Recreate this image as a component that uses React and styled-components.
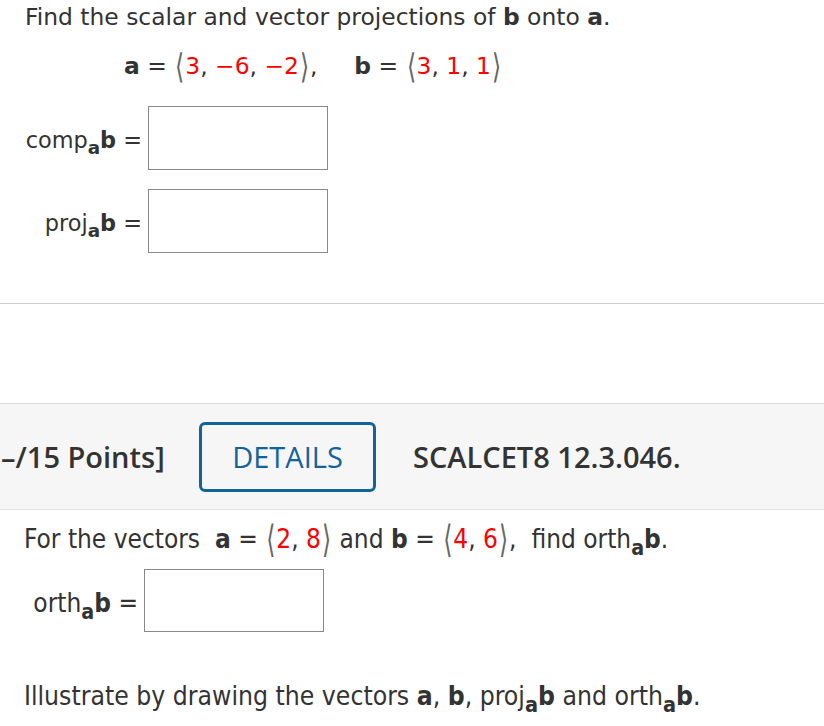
import React from "react";
import styled, { createGlobalStyle } from "styled-components";

const GlobalStyle = createGlobalStyle`
  html, body {
    margin: 0;
    padding: 0;
    background: #fff;
    overflow: hidden;
  }
`;

const Page = styled.div`
  width: 824px;
  height: 726px;
  overflow: hidden;
  font-family: "DejaVu Sans", Verdana, sans-serif;
  color: #333;
`;

const TopSection = styled.div`
  height: 304px;
  padding-top: 5px;
  box-sizing: border-box;
  border-bottom: 1px solid #cccccc;
`;

const Prompt = styled.div`
  padding-left: 25px;
  font-size: 23.4px;
  line-height: 24px;
  white-space: nowrap;
`;

const VectorLine = styled.div`
  margin-top: 25px;
  padding-left: 124px;
  font-size: 23.4px;
  line-height: 24px;
  display: flex;
  align-items: center;
  gap: 37px;
  white-space: nowrap;
`;

const Num = styled.span`
  color: #f00;
`;

const Bracket = styled.span`
  display: inline-block;
  color: #666;
  font-weight: 300;
  transform: scaleY(1.45);
  margin: 0 1px;
`;

const Bold = styled.b`
  font-weight: bold;
`;

const Sub = styled.sub`
  font-weight: bold;
  font-size: 0.82em;
  vertical-align: -0.32em;
  line-height: 0;
`;

const AnswerRow = styled.div`
  display: flex;
  align-items: center;
  margin-top: ${(p) => p.$top}px;
  gap: 6px;
`;

const Label = styled.div`
  width: ${(p) => p.$width}px;
  text-align: right;
  font-size: ${(p) => p.$size}px;
  padding-top: 4px;
  white-space: nowrap;
`;

const AnswerBox = styled.div`
  width: ${(p) => p.$w}px;
  height: ${(p) => p.$h}px;
  box-sizing: border-box;
  border: 1px solid #888;
  background: #fff;
`;

const Gap = styled.div`
  height: 99px;
`;

const HeaderBar = styled.div`
  height: 107px;
  box-sizing: border-box;
  background: #f6f6f6;
  border-top: 1px solid #dcdcdc;
  border-bottom: 1px solid #e2e2e2;
  display: flex;
  align-items: center;
  font-family: "Open Sans", sans-serif;
  font-weight: 600;
  font-size: 29px;
  color: #333;
  white-space: nowrap;
`;

const Points = styled.div`
  margin-left: 1px;
  width: 198px;
`;

const DetailsButton = styled.button`
  width: 177px;
  height: 70px;
  box-sizing: border-box;
  border: 3px solid #13639b;
  border-radius: 6px;
  background: transparent;
  color: #13639b;
  font: inherit;
  font-weight: 500;
  padding: 0;
`;

const Ref = styled.div`
  margin-left: 37px;
`;

const Question = styled.div`
  font-family: "DejaVu Sans Condensed", "DejaVu Sans", sans-serif;
  font-stretch: condensed;
  color: #333;
`;

const QuestionText = styled.div`
  padding: 15px 0 0 24px;
  font-size: 26px;
  line-height: 28px;
  white-space: pre;
`;

const Illustrate = styled.div`
  margin-top: 50px;
  padding-left: 24px;
  font-size: 26.3px;
  line-height: 28px;
  white-space: nowrap;
`;

const Vec = ({ values }) => (
  <span>
    <Bracket>⟨</Bracket>
    {values.map((v, i) => (
      <React.Fragment key={i}>
        {i > 0 && ", "}
        <Num>{v}</Num>
      </React.Fragment>
    ))}
    <Bracket>⟩</Bracket>
  </span>
);

export default function App() {
  return (
    <Page>
      <GlobalStyle />
      <TopSection>
        <Prompt>
          Find the scalar and vector projections of <Bold>b</Bold> onto <Bold>a</Bold>.
        </Prompt>
        <VectorLine>
          <span>
            <Bold>a</Bold> = <Vec values={["3", "−6", "−2"]} />,
          </span>
          <span>
            <Bold>b</Bold> = <Vec values={["3", "1", "1"]} />
          </span>
        </VectorLine>
        <AnswerRow $top={28}>
          <Label $width={142} $size={22.4}>
            comp<Sub>a</Sub>
            <Bold>b</Bold> =
          </Label>
          <AnswerBox $w={180} $h={64} />
        </AnswerRow>
        <AnswerRow $top={19}>
          <Label $width={142} $size={22.4}>
            proj<Sub>a</Sub>
            <Bold>b</Bold> =
          </Label>
          <AnswerBox $w={180} $h={64} />
        </AnswerRow>
      </TopSection>
      <Gap />
      <HeaderBar>
        <Points>–/15 Points]</Points>
        <DetailsButton>DETAILS</DetailsButton>
        <Ref>SCALCET8 12.3.046.</Ref>
      </HeaderBar>
      <Question>
        <QuestionText>
          {"For the vectors  "}
          <Bold>a</Bold>
          {" = "}
          <Vec values={["2", "8"]} />
          {" and "}
          <Bold>b</Bold>
          {" = "}
          <Vec values={["4", "6"]} />
          {",  find orth"}
          <Sub>a</Sub>
          <Bold>b</Bold>.
        </QuestionText>
        <AnswerRow $top={16}>
          <Label $width={138} $size={26}>
            orth<Sub>a</Sub>
            <Bold>b</Bold> =
          </Label>
          <AnswerBox $w={180} $h={63} />
        </AnswerRow>
        <Illustrate>
          Illustrate by drawing the vectors <Bold>a</Bold>, <Bold>b</Bold>, proj<Sub>a</Sub>
          <Bold>b</Bold> and orth<Sub>a</Sub>
          <Bold>b</Bold>.
        </Illustrate>
      </Question>
    </Page>
  );
}
